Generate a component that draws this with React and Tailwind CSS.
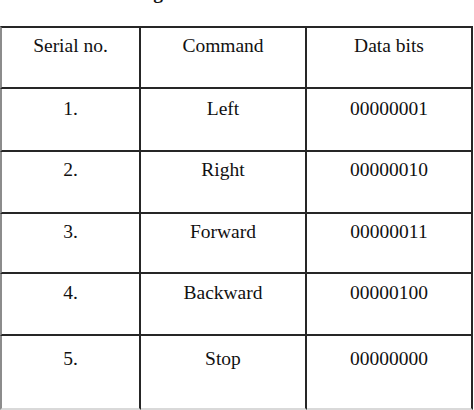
import React from 'react';

const rows = [
  { no: '1.', cmd: 'Left', bits: '00000001', h: 'h-[63px]', pt: 'pt-[9px]' },
  { no: '2.', cmd: 'Right', bits: '00000010', h: 'h-[62px]', pt: 'pt-[7px]' },
  { no: '3.', cmd: 'Forward', bits: '00000011', h: 'h-[60px]', pt: 'pt-[7px]' },
  { no: '4.', cmd: 'Backward', bits: '00000100', h: 'h-[62px]', pt: 'pt-[8px]' },
  { no: '5.', cmd: 'Stop', bits: '00000000', h: 'h-[74px]', pt: 'pt-[12px]', last: true },
];

function Cell({ children, first, className = '' }) {
  return (
    <div
      className={`text-center border-r-2 border-r-[#262626] ${first ? 'border-l-2 border-l-[#8c8c8c]' : ''} ${className}`}
    >
      {children}
    </div>
  );
}

export default function App() {
  return (
    <div className="w-[474px] h-[410px] overflow-hidden bg-white text-[#111] font-['Liberation_Serif',serif]">
      {/* caption, only the descender of its line reaches into view */}
      <div className="-mt-[18px] h-[22px] pl-[12px] text-[19.5px] leading-[22px] font-bold whitespace-nowrap">
        Table 1: Encoding of commands
      </div>

      <div className="mt-[22px] grid grid-cols-[141px_166px_166px] text-[19.5px] leading-[22px]">
        <Cell first className="h-[63px] pt-[7px] border-y-2 border-y-[#262626]">Serial no.</Cell>
        <Cell className="h-[63px] pt-[7px] border-y-2 border-y-[#262626]">Command</Cell>
        <Cell className="h-[63px] pt-[7px] border-y-2 border-y-[#262626]">Data bits</Cell>

        {rows.map((r) => {
          const b = r.last ? 'border-b-2 border-b-[#d9d9d9]' : 'border-b-2 border-b-[#262626]';
          return (
            <React.Fragment key={r.no}>
              <Cell first className={`${r.h} ${r.pt} ${b}`}>{r.no}</Cell>
              <Cell className={`${r.h} ${r.pt} ${b}`}>{r.cmd}</Cell>
              <Cell className={`${r.h} ${r.pt} ${b}`}>{r.bits}</Cell>
            </React.Fragment>
          );
        })}
      </div>
    </div>
  );
}
